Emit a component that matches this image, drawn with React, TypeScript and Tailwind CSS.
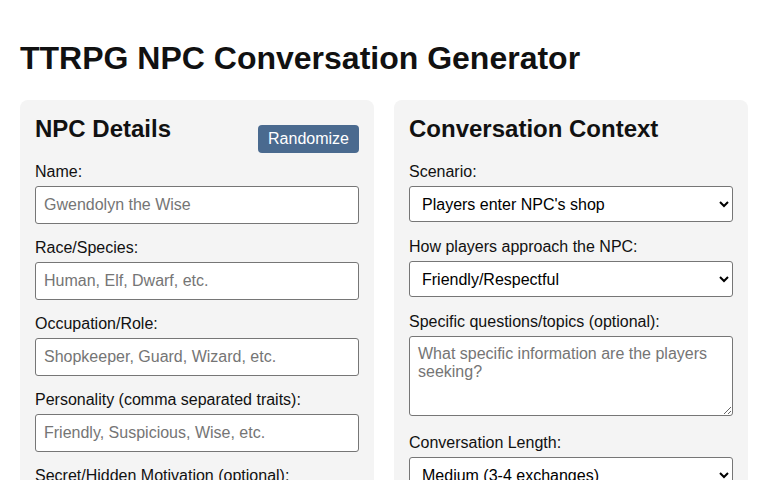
const inputCls =
  "block w-full h-[38px] px-2 border border-[#767676] rounded-[3px] bg-white text-base leading-[18px] text-[#111] placeholder:text-[#757575]";
const selectCls =
  "block w-full h-[36px] px-2 border border-[#767676] rounded-[3px] bg-white text-base leading-[18px] text-black";
const labelCls = "block mb-[5px] text-base leading-[18px] text-[#111]";

function Field({ label, placeholder }: { label: string; placeholder: string }) {
  return (
    <div className="mb-[15px]">
      <label className={labelCls}>{label}</label>
      <input type="text" placeholder={placeholder} className={inputCls} />
    </div>
  );
}

function SelectField({ label, options }: { label: string; options: string[] }) {
  return (
    <div className="mb-[16px]">
      <label className={labelCls}>{label}</label>
      <select className={selectCls} defaultValue={options[0]}>
        {options.map((o) => (
          <option key={o}>{o}</option>
        ))}
      </select>
    </div>
  );
}

export default function App() {
  return (
    <div className="min-h-screen bg-white p-5 font-['Liberation_Sans',Arial,sans-serif] text-[#111]">
      <h1 className="mt-5 mb-[23px] text-[32px] leading-[37px] font-bold">
        TTRPG NPC Conversation Generator
      </h1>

      <div className="grid grid-cols-2 gap-5 items-start">
        {/* left panel */}
        <div className="bg-[#f4f4f4] rounded-lg p-[15px]">
          <div className="flex items-center justify-between">
            <h2 className="mb-5 text-2xl leading-[28px] font-bold">NPC Details</h2>
            <button className="h-[28px] px-[10px] rounded bg-[#4a6a8f] text-white text-base leading-[18px]">
              Randomize
            </button>
          </div>
          <Field label="Name:" placeholder="Gwendolyn the Wise" />
          <Field label="Race/Species:" placeholder="Human, Elf, Dwarf, etc." />
          <Field label="Occupation/Role:" placeholder="Shopkeeper, Guard, Wizard, etc." />
          <Field
            label="Personality (comma separated traits):"
            placeholder="Friendly, Suspicious, Wise, etc."
          />
          <div className="mb-[15px]">
            <label className={labelCls}>Secret/Hidden Motivation (optional):</label>
            <textarea
              placeholder="What is the NPC hiding?"
              className="block w-full h-[80px] px-2 py-2 border border-[#767676] rounded-[3px] bg-white text-base leading-[18px] placeholder:text-[#757575]"
            />
          </div>
        </div>

        {/* right panel */}
        <div className="bg-[#f4f4f4] rounded-lg p-[15px]">
          <h2 className="mb-5 text-2xl leading-[28px] font-bold">Conversation Context</h2>
          <SelectField
            label="Scenario:"
            options={[
              "Players enter NPC's shop",
              "Players meet NPC on the road",
              "Players interrogate NPC",
              "NPC approaches players",
            ]}
          />
          <SelectField
            label="How players approach the NPC:"
            options={["Friendly/Respectful", "Neutral/Businesslike", "Hostile/Threatening", "Deceptive"]}
          />
          <div className="mb-[18px]">
            <label className={labelCls}>Specific questions/topics (optional):</label>
            <textarea
              placeholder="What specific information are the players seeking?"
              className="block w-full h-[80px] px-2 py-2 border border-[#767676] rounded-[3px] bg-white text-base leading-[18px] placeholder:text-[#757575]"
            />
          </div>
          <SelectField
            label="Conversation Length:"
            options={["Medium (3-4 exchanges)", "Short (1-2 exchanges)", "Long (5+ exchanges)"]}
          />
        </div>
      </div>
    </div>
  );
}
